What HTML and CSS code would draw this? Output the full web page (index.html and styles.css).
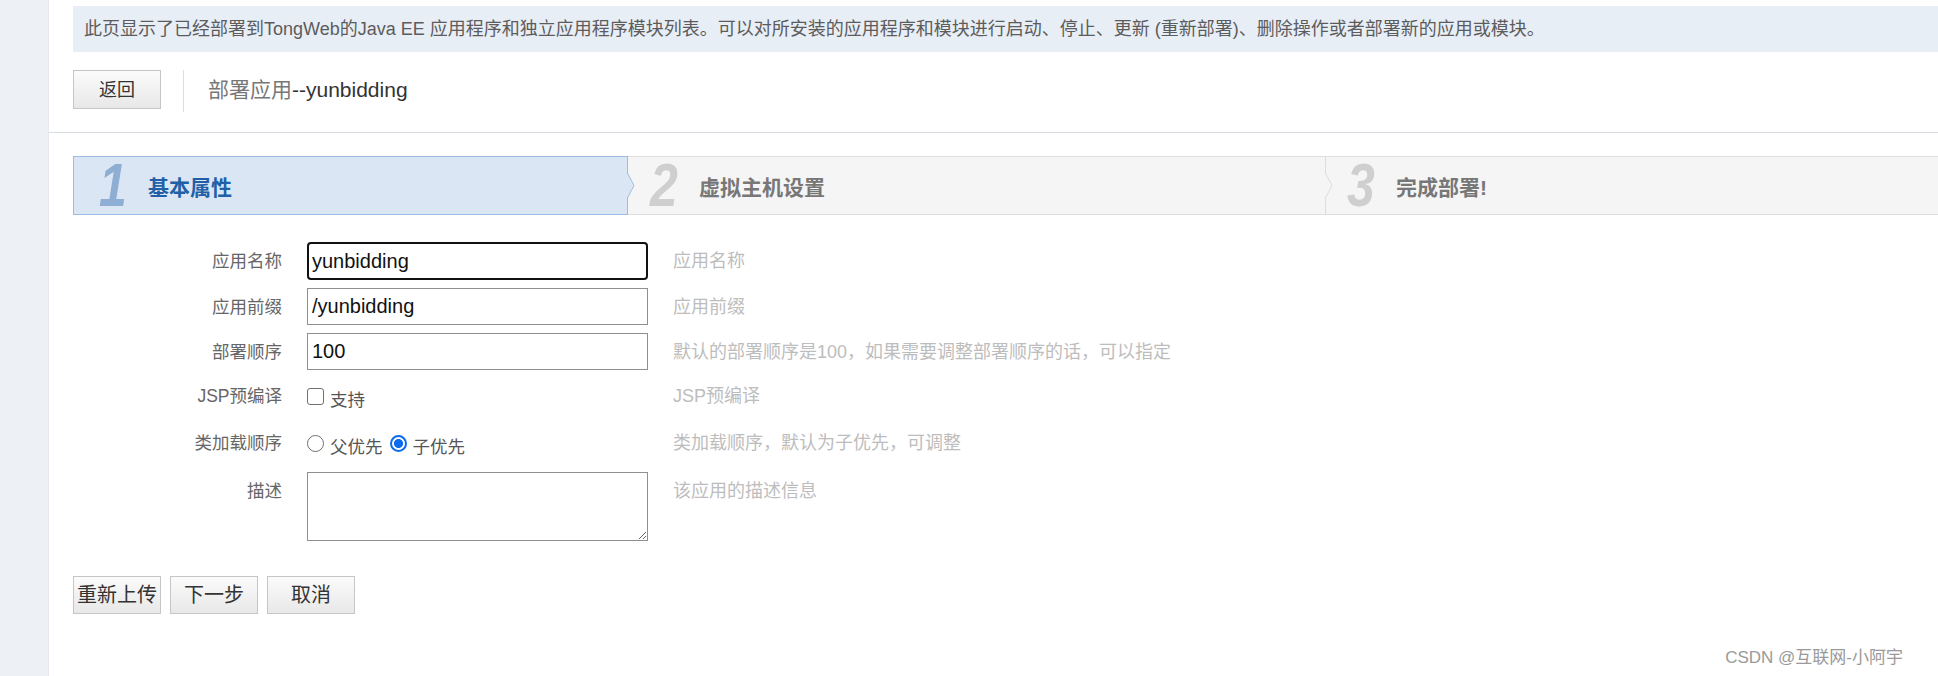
FILE: index.html
```html
<!DOCTYPE html>
<html lang="zh-CN">
<head>
<meta charset="utf-8">
<title>部署应用</title>
<link rel="stylesheet" href="styles.css">
</head>
<body>
<div class="sidebar"></div>
<main class="main">
  <div class="info">此页显示了已经部署到TongWeb的Java EE 应用程序和独立应用程序模块列表。可以对所安装的应用程序和模块进行启动、停止、更新 (重新部署)、删除操作或者部署新的应用或模块。</div>
  <div class="header">
    <button class="btn btn-back" type="button">返回</button>
    <span class="sep"></span>
    <h1 class="title"><span class="title-cn">部署应用</span>--yunbidding</h1>
  </div>
  <div class="content">
    <div class="steps">
      <div class="step step-active">
        <span class="num"><span class="num-glyph">1</span></span>
        <span class="step-label">基本属性</span>
        <svg class="chev" width="9" height="57" viewBox="0 0 9 57"><path d="M0 16 L7 28.5 L0 41 Z" fill="#dbe6f5"/><path d="M0.5 16 L7 28.5 L0.5 41" fill="none" stroke="#9dbde0" stroke-width="1"/></svg>
      </div>
      <div class="step step-two">
        <span class="num"><span class="num-glyph">2</span></span>
        <span class="step-label">虚拟主机设置</span>
        <svg class="chev" width="9" height="57" viewBox="0 0 9 57"><path d="M0 16 L7 28.5 L0 41 Z" fill="#f5f5f5"/><path d="M0.5 16 L7 28.5 L0.5 41" fill="none" stroke="#dddddd" stroke-width="1"/></svg>
      </div>
      <div class="step step-three">
        <span class="num"><span class="num-glyph">3</span></span>
        <span class="step-label">完成部署!</span>
      </div>
    </div>

    <form class="form">
      <label class="lbl r1">应用名称</label>
      <div class="field r1"><input class="inp inp-focus" type="text" value="yunbidding"></div>
      <div class="hint r1">应用名称</div>

      <label class="lbl r2">应用前缀</label>
      <div class="field r2"><input class="inp" type="text" value="/yunbidding"></div>
      <div class="hint r2">应用前缀</div>

      <label class="lbl r3">部署顺序</label>
      <div class="field r3"><input class="inp" type="text" value="100"></div>
      <div class="hint r3">默认的部署顺序是100，如果需要调整部署顺序的话，可以指定</div>

      <label class="lbl r4">JSP预编译</label>
      <div class="field r4 choice"><input class="chk" type="checkbox"><span class="opt">支持</span></div>
      <div class="hint r4">JSP预编译</div>

      <label class="lbl r5">类加载顺序</label>
      <div class="field r5 choice"><input class="rad" type="radio" name="order"><span class="opt">父优先</span><input class="rad rad-2" type="radio" name="order" checked><span class="opt">子优先</span></div>
      <div class="hint r5">类加载顺序，默认为子优先，可调整</div>

      <label class="lbl r6">描述</label>
      <div class="field r6"><textarea class="area"></textarea></div>
      <div class="hint r6">该应用的描述信息</div>
    </form>

    <div class="actions">
      <button class="btn" type="button">重新上传</button>
      <button class="btn" type="button">下一步</button>
      <button class="btn" type="button">取消</button>
    </div>
  </div>
  <div class="watermark">CSDN @互联网-小阿宇</div>
</main>
</body>
</html>
```

FILE: styles.css
```css
* { box-sizing: border-box; }

html, body {
  margin: 0;
  padding: 0;
  height: 676px;
  overflow: hidden;
  background: #ffffff;
}

body {
  display: flex;
  font-family: "Liberation Sans", "Noto Sans CJK SC", sans-serif;
  color: #333;
}

.sidebar {
  width: 49px;
  flex: none;
  background: #edf1f6;
  border-right: 1px solid #e6eaf0;
}

.main {
  flex: 1;
  position: relative;
  min-width: 0;
}

.info {
  margin: 6px 0 0 24px;
  height: 46px;
  line-height: 46px;
  padding-left: 11px;
  background: #e8eef6;
  font-size: 18px;
  color: #5c5c5c;
  white-space: nowrap;
  overflow: hidden;
}

.header {
  height: 81px;
  padding: 18px 24px 0;
  display: flex;
  align-items: flex-start;
  border-bottom: 1px solid #d9dde3;
}

.btn {
  width: 88px;
  height: 38px;
  padding: 0;
  font-family: "Liberation Sans", "Noto Sans CJK SC", sans-serif;
  font-size: 20px;
  color: #333;
  background: linear-gradient(#fbfbfb, #e8e8e8);
  border: 1px solid #c6c6c6;
  border-radius: 0;
  line-height: 36px;
}

.btn-back {
  height: 39px;
  font-size: 18px;
}

.sep {
  width: 1px;
  height: 42px;
  background: #dedede;
  margin-left: 22px;
}

.title {
  margin: 0 0 0 24px;
  height: 39px;
  line-height: 39px;
  font-size: 21px;
  font-weight: normal;
  color: #333;
}

.title-cn { color: #777; }

.content {
  padding-left: 24px;
}

.steps {
  margin-top: 23px;
  height: 59px;
  display: flex;
}

.step {
  position: relative;
  display: flex;
  align-items: center;
  height: 59px;
  background: #f5f5f5;
  border-top: 1px solid #dedede;
  border-bottom: 1px solid #dedede;
}

.step-active {
  width: 555px;
  background: #dbe6f5;
  border: 1px solid #9dbde0;
  padding-left: 25px;
  z-index: 2;
}

.step-two {
  width: 698px;
  padding-left: 22px;
  border-right: 1px solid #dddddd;
  z-index: 1;
}

.step-three {
  flex: 1;
  padding-left: 21px;
}

.chev {
  position: absolute;
  top: 0;
  left: 100%;
  display: block;
}

.num {
  width: 49px;
  flex: none;
  display: inline-block;
}

.num-glyph {
  display: inline-block;
  font-family: "Liberation Sans", sans-serif;
  font-weight: bold;
  font-style: italic;
  font-size: 61px;
  line-height: 59px;
  color: #cfcfcf;
  transform: scaleX(0.82);
  transform-origin: left center;
}

.step-active .num-glyph { color: #8eaed4; }

.step-label {
  font-size: 21px;
  font-weight: bold;
  color: #777;
}

.step-active .step-label { color: #2160a6; }

.form {
  margin-top: 27px;
  display: grid;
  grid-template-columns: 209px 341px 1fr;
  grid-template-rows: 38px 37px 37px 36px 42px 69px;
  column-gap: 25px;
  row-gap: 8px;
}

.r1 { grid-row: 1; }
.r2 { grid-row: 2; }
.r3 { grid-row: 3; }
.r4 { grid-row: 4; }
.r5 { grid-row: 5; }
.r6 { grid-row: 6; }

.lbl {
  grid-column: 1;
  text-align: right;
  font-size: 17.5px;
  color: #666;
  line-height: 38px;
  align-self: center;
}

.lbl.r6 { align-self: start; }

.field {
  grid-column: 2;
  display: flex;
  align-items: center;
}

.hint {
  grid-column: 3;
  font-size: 18px;
  color: #bdbdbd;
  line-height: 38px;
  align-self: center;
  white-space: nowrap;
}

.hint.r6 { align-self: start; }

.inp {
  width: 341px;
  height: 37px;
  margin: 0;
  padding: 0 4px;
  border: 1px solid #8f8f8f;
  border-radius: 0;
  font-family: "Liberation Sans", sans-serif;
  font-size: 20px;
  color: #111;
  background: #fff;
  outline: none;
}

.inp-focus {
  height: 38px;
  border: 2px solid #111;
  border-radius: 4px;
  padding: 0 3px;
}

.choice { align-items: center; }

.chk {
  appearance: none;
  -webkit-appearance: none;
  width: 17px;
  height: 17px;
  margin: 0;
  flex: none;
  border: 1px solid #6f6f6f;
  border-radius: 3px;
  background: #fff;
}

.rad {
  appearance: none;
  -webkit-appearance: none;
  width: 17px;
  height: 17px;
  margin: 0;
  flex: none;
  border: 1px solid #6f6f6f;
  border-radius: 50%;
  background: #fff;
}

.rad:checked {
  border: 2px solid #0b6cf0;
  background: radial-gradient(circle, #0b6cf0 0, #0b6cf0 4.2px, #ffffff 4.8px);
}

.rad-2 { margin-left: 7px; }

.opt {
  margin-left: 6px;
  font-size: 17.5px;
  color: #555;
  position: relative;
  top: 2px;
}

.area {
  width: 341px;
  height: 69px;
  margin: 0;
  border: 1px solid #8f8f8f;
  border-radius: 0;
  font-size: 18px;
  display: block;
}

.actions {
  margin-top: 35px;
  display: flex;
  gap: 9px;
}

.watermark {
  position: absolute;
  right: 35px;
  bottom: 8px;
  font-size: 17px;
  color: #9a9a9a;
  text-shadow: 0 0 1px #ffffff;
  white-space: nowrap;
}
```
